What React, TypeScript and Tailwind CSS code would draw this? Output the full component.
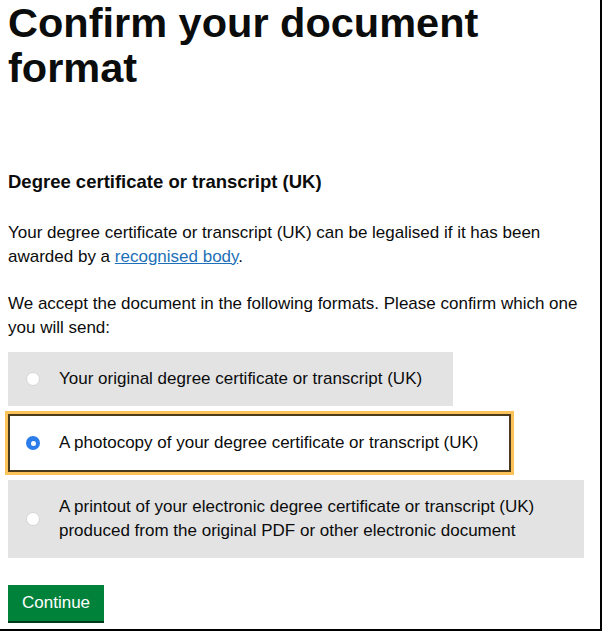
export default function App() {
  const options = [
    { id: 'original', label: 'Your original degree certificate or transcript (UK)', checked: false },
    { id: 'photocopy', label: 'A photocopy of your degree certificate or transcript (UK)', checked: true },
    {
      id: 'printout',
      label:
        'A printout of your electronic degree certificate or transcript (UK) produced from the original PDF or other electronic document',
      checked: false,
    },
  ]

  return (
    <div
      className="h-[631px] w-[602px] overflow-hidden border-b-2 border-r-2 border-black bg-white pl-2 pr-4 text-[#0b0c0c]"
      style={{ fontFamily: '"Liberation Sans", Arial, sans-serif' }}
    >
      <h1 className="text-[41.5px] font-bold leading-[45px]">Confirm your document format</h1>

      <h2 className="mt-[79px] text-[18.5px] font-bold leading-[26px]">Degree certificate or transcript (UK)</h2>

      <p className="mt-[26px] text-[17px] leading-[23.5px]">
        Your degree certificate or transcript (UK) can be legalised if it has been awarded by a{' '}
        <a href="#" className="text-[#1d70b8] underline">
          recognised body
        </a>
        .
      </p>

      <p className="mt-[24px] text-[17px] leading-[24px]">
        We accept the document in the following formats. Please confirm which one you will send:
      </p>

      <div className="mt-[12px] flex flex-col items-start gap-[8px]">
        {options.map((o) =>
          o.checked ? (
            <label
              key={o.id}
              className="flex max-w-[578px] items-center gap-[19px] border-2 border-[#4a3b1c] bg-white py-[15px] pl-[16px] pr-[30px] text-[17px] leading-[24px] outline outline-[3px] outline-[#fbc35a]"
            >
              <span className="flex h-[14px] w-[14px] shrink-0 items-center justify-center rounded-full bg-[#2b7de9]">
                <span className="h-[5px] w-[5px] rounded-full bg-white" />
              </span>
              {o.label}
            </label>
          ) : (
            <label
              key={o.id}
              className="flex max-w-[578px] items-center gap-[19px] bg-[#e3e3e4] py-[15px] pl-[18px] pr-[31px] text-[17px] leading-[24px]"
            >
              <span className="h-[14px] w-[14px] shrink-0 rounded-full border border-[#d6d6d6] bg-white" />
              {o.label}
            </label>
          ),
        )}
      </div>

      <button
        type="button"
        className="mt-[27px] bg-[#00823b] px-[14px] py-[6px] text-[17px] leading-[24px] text-white shadow-[0_2px_0_#003a1a]"
      >
        Continue
      </button>
    </div>
  )
}
